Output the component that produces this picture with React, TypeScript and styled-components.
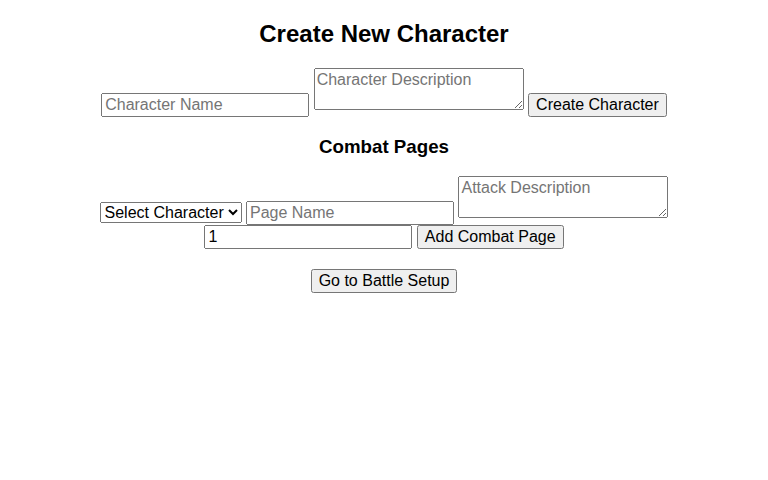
import React from "react";
import styled, { createGlobalStyle } from "styled-components";

const GlobalStyle = createGlobalStyle`
  body {
    margin: 0 8px 8px;
    font-family: "Liberation Sans", Arial, sans-serif;
    background: #ffffff;
    color: #000000;
  }
`;

const Page = styled.div`
  text-align: center;
  font-size: 16px;
`;

const Title = styled.h2`
  font-size: 24px;
  margin: 20px 0;
`;

const SectionTitle = styled.h3`
  font-size: 18.72px;
  margin: 18.72px 0;
`;

const FormRow = styled.div`
  font-size: 16px;
`;

const TextInput = styled.input`
  font-family: inherit;
  font-size: 16px;
  width: 200px;
`;

const TextArea = styled.textarea`
  font-family: inherit;
  font-size: 16px;
  width: 204px;
  height: 36px;
`;

const Select = styled.select`
  font-family: inherit;
  font-size: 16px;
`;

const Button = styled.button`
  font-family: inherit;
  font-size: 16px;
`;

const Footer = styled.div`
  margin-top: 20px;
`;

const App = () => {
  return (
    <Page>
      <GlobalStyle />
      <Title>Create New Character</Title>
      <FormRow>
        <TextInput placeholder="Character Name" />{" "}
        <TextArea placeholder="Character Description" />{" "}
        <Button>Create Character</Button>
      </FormRow>

      <SectionTitle>Combat Pages</SectionTitle>
      <FormRow>
        <Select defaultValue="">
          <option value="">Select Character</option>
        </Select>{" "}
        <TextInput placeholder="Page Name" />{" "}
        <TextArea placeholder="Attack Description" />{" "}
        <TextInput type="number" defaultValue={1} />{" "}
        <Button>Add Combat Page</Button>
      </FormRow>

      <Footer>
        <Button>Go to Battle Setup</Button>
      </Footer>
    </Page>
  );
};

export default App;
